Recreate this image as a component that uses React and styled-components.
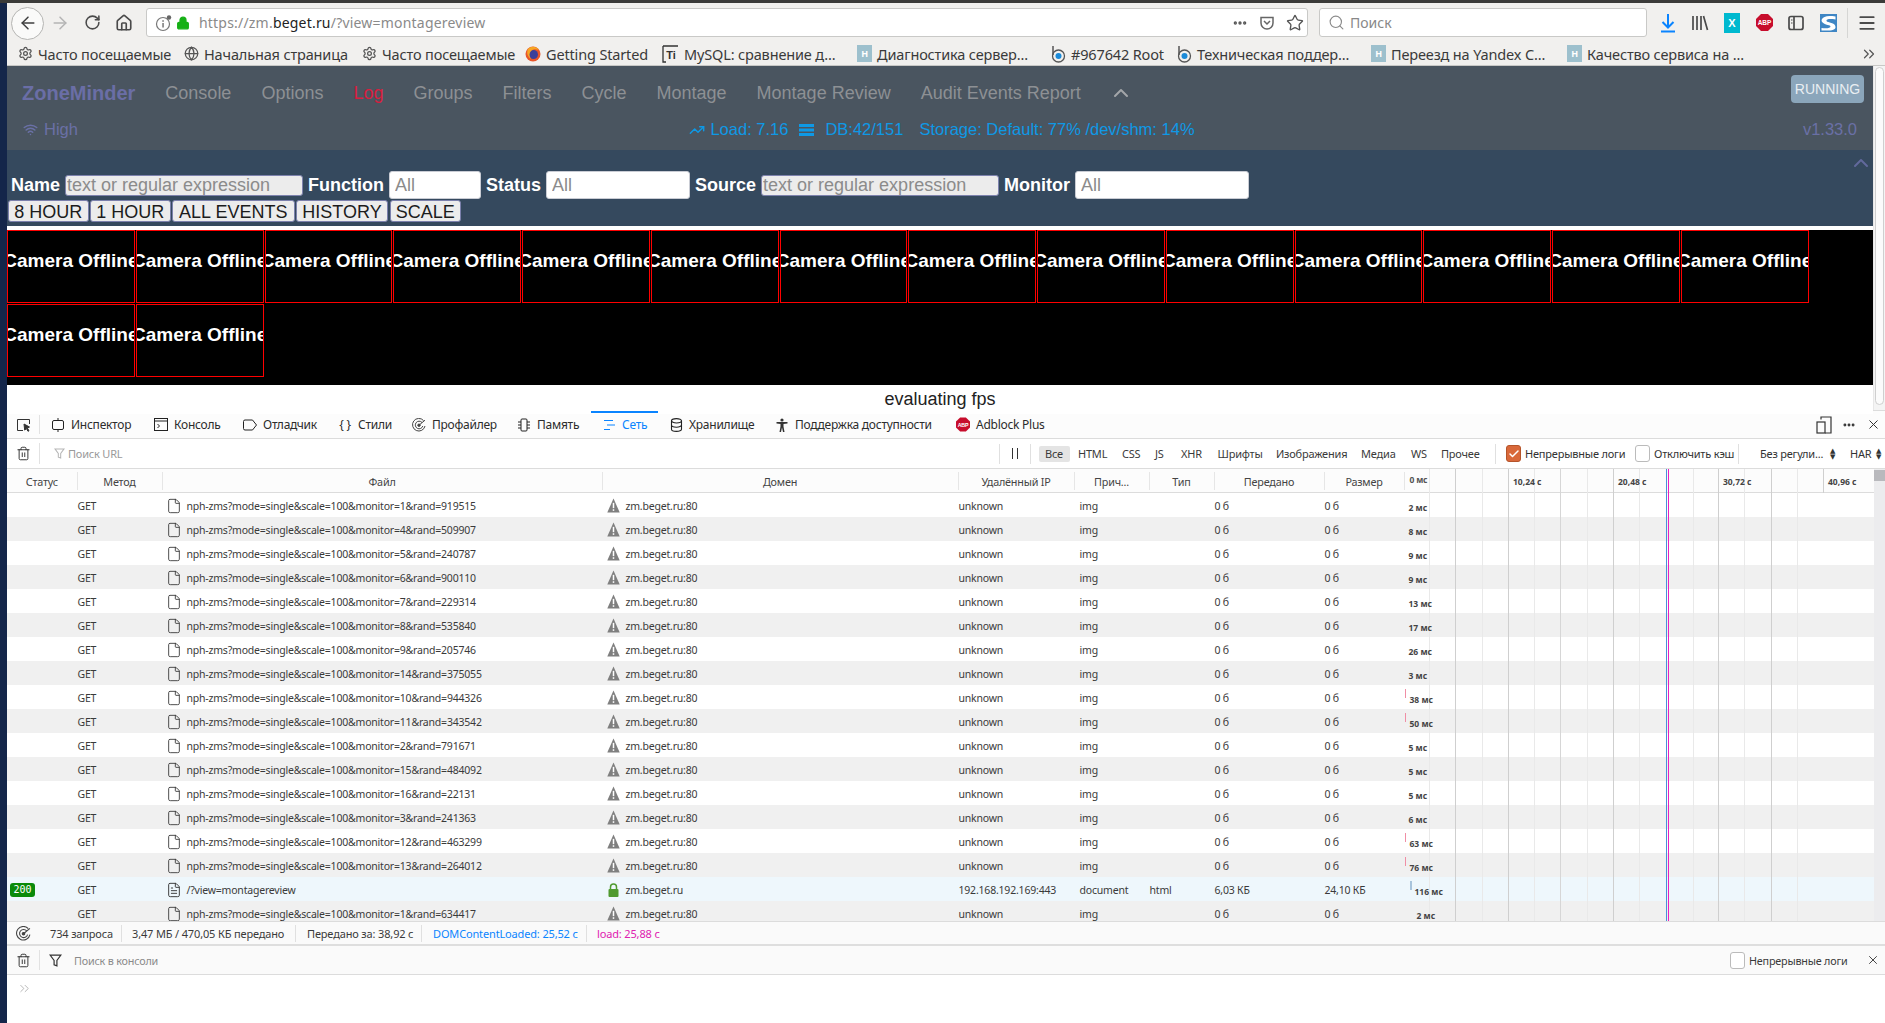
import styled, { createGlobalStyle } from 'styled-components';
import {
  ArrowLeft,
  ArrowRight,
  RotateCw,
  Home,
  Star,
  Search,
  ChevronUp,
  ChevronsRight,
  Menu,
  X,
  File,
  FileText,
  Wifi,
  TrendingUp,
  Settings,
  Globe,
  Trash2,
  Check,
  Lock,
  Ellipsis,
} from 'lucide-react';

const UI_FONT = '"Noto Sans", "DejaVu Sans", sans-serif';
const WEB_FONT = '"Liberation Sans", Arial, sans-serif';

const GlobalStyle = createGlobalStyle`
  html, body {
    margin: 0;
    padding: 0;
    background: #fff;
  }
  * {
    box-sizing: border-box;
  }
`;

const Root = styled.div`
  width: 1885px;
  height: 1023px;
  overflow: hidden;
  display: flex;
  flex-direction: column;
  background: #14264a;
`;

const TopEdge = styled.div`
  height: 3px;
  flex: none;
  background: #3b3b39;
`;

const Desktop = styled.div`
  flex: 1;
  display: flex;
  min-height: 0;
`;

const LeftEdge = styled.div`
  width: 7px;
  flex: none;
  background: #14264a;
`;

const BrowserWindow = styled.div`
  width: 1878px;
  flex: none;
  display: flex;
  flex-direction: column;
  background: #fff;
  font-family: ${UI_FONT};
`;

/* browser chrome */
const Toolbar = styled.div`
  height: 39px;
  flex: none;
  display: flex;
  align-items: center;
  padding-left: 4px;
  background: #f1f0ee;
`;

const BackButton = styled.div`
  width: 33px;
  height: 33px;
  flex: none;
  margin-top: 1px;
  border: 1px solid #b5b5b3;
  border-radius: 50%;
  background: #fafaf9;
  color: #3f3f3f;
  display: flex;
  align-items: center;
  justify-content: center;
`;

const ToolSlot = styled.div`
  width: 32px;
  height: 32px;
  flex: none;
  display: flex;
  align-items: center;
  justify-content: center;
  color: ${(p) => p.$color || '#4a4a4a'};
`;

const UrlBar = styled.div`
  width: 1162px;
  height: 29px;
  margin-left: 6px;
  flex: none;
  display: flex;
  align-items: center;
  background: #fff;
  border: 1px solid #c9c9c7;
  border-radius: 3px;
  padding-left: 7px;
  font-size: 14px;
  color: #8a8a8a;
`;

const UrlHost = styled.span`
  color: #222;
`;

const UrlText = styled.div`
  margin-left: 9px;
  flex: 1;
  letter-spacing: 0.2px;
  white-space: nowrap;
`;

const UrlActions = styled.div`
  display: flex;
  align-items: center;
  gap: 11px;
  padding-right: 3px;
  color: #555;
`;

const SearchBox = styled.div`
  width: 328px;
  height: 29px;
  margin-left: 11px;
  flex: none;
  display: flex;
  align-items: center;
  gap: 5px;
  padding-left: 8px;
  background: #fff;
  border: 1px solid #c9c9c7;
  border-radius: 3px;
  color: #888;
  font-size: 14px;
`;

const ToolIcons = styled.div`
  display: flex;
  align-items: center;
  margin-left: 5px;
`;

const ToolSeparator = styled.div`
  width: 1px;
  height: 30px;
  margin: 0 3px;
  background: #d6d6d4;
`;

const Bookmarks = styled.div`
  height: 24px;
  flex: none;
  display: flex;
  align-items: center;
  padding-left: 11px;
  background: #f1f0ee;
  border-bottom: 1px solid #c8c8c6;
`;

const Bookmark = styled.div`
  width: ${(p) => p.$w}px;
  flex: none;
  display: flex;
  align-items: center;
  gap: 5px;
  white-space: nowrap;
  font-size: 14.5px;
  letter-spacing: -0.15px;
  color: #3a3a3a;
`;

const BookmarkMore = styled.div`
  flex: none;
  margin-left: 96px;
  color: #555;
  display: flex;
`;

const FavH = styled.div`
  width: 15px;
  height: 17px;
  flex: none;
  background: #9dc0cd;
  color: #fff;
  font-size: 9px;
  font-weight: 700;
  text-align: center;
  line-height: 17px;
`;

/* page */
const PageArea = styled.div`
  height: 344px;
  flex: none;
  display: flex;
`;

const Page = styled.div`
  width: 1866px;
  flex: none;
  display: flex;
  flex-direction: column;
  font-family: ${WEB_FONT};
  position: relative;
`;

const PageScroll = styled.div`
  flex: 1;
  background: #f4f4f4;
  padding: 1px 1px;
  border-left: 1px solid #e8e8e8;
`;

const PageThumb = styled.div`
  height: 338px;
  border: 1px solid #cfcfcf;
  border-radius: 5px;
  background: #fbfbfb;
`;

const NavBar = styled.div`
  height: 84px;
  flex: none;
  background: #4a5560;
  display: flex;
  flex-direction: column;
`;

const NavTop = styled.div`
  height: 54px;
  flex: none;
  display: flex;
  align-items: center;
  gap: 30px;
  padding: 0 9px 0 15px;
`;

const Brand = styled.div`
  font-size: 20px;
  font-weight: 700;
  color: #6a6ea6;
`;

const NavLink = styled.div`
  font-size: 18px;
  white-space: nowrap;
  color: ${(p) => (p.$active ? '#d81e3f' : '#8d9094')};
`;

const NavCollapse = styled.div`
  display: flex;
  color: #a3a6a9;
  margin-left: -2px;
`;

const RunningBadge = styled.div`
  margin-left: auto;
  margin-top: -8px;
  width: 73px;
  height: 28px;
  border-radius: 4px;
  background: #8ba6bb;
  color: #e9eef2;
  font-size: 14px;
  display: flex;
  align-items: center;
  justify-content: center;
`;

const NavBottom = styled.div`
  height: 14px;
  flex: none;
  display: grid;
  grid-template-columns: 1fr auto 1fr;
  align-items: center;
  padding: 0 16px;
  font-size: 16.5px;
`;

const Signal = styled.div`
  display: flex;
  align-items: center;
  gap: 6px;
  color: #6a70a6;
`;

const Stats = styled.div`
  display: flex;
  align-items: center;
  padding-left: 4px;
  color: #0e99e6;
  white-space: nowrap;
`;

const StatIcon = styled.div`
  display: flex;
  margin: ${(p) => p.$m};
`;

const Version = styled.div`
  color: #6a70a6;
  text-align: right;
`;

const FilterBar = styled.div`
  height: 76px;
  flex: none;
  background: #35495e;
  padding-top: 21px;
`;

const FilterCollapse = styled.div`
  position: absolute;
  right: 0;
  top: 85px;
  color: #62699c;
  display: flex;
`;

const FilterRow = styled.div`
  height: 28px;
  display: flex;
  align-items: center;
  gap: 5px;
  padding-left: 4px;
`;

const FilterLabel = styled.label`
  font-size: 18px;
  font-weight: 700;
  color: #fff;
  white-space: nowrap;
`;

const FilterInput = styled.input`
  width: ${(p) => p.$w}px;
  height: ${(p) => (p.$text ? 21 : 28)}px;
  flex: none;
  padding: 0 2px 0 ${(p) => (p.$text ? 1 : 5)}px;
  font-family: ${WEB_FONT};
  font-size: 18px;
  background: ${(p) => (p.$text ? '#ececec' : '#fff')};
  border: 1px solid ${(p) => (p.$text ? '#7d82ad' : '#c9ccd4')};
  border-radius: 3px;
  outline: none;
  &::placeholder {
    color: #8b8b8b;
    opacity: 1;
  }
`;

const RangeRow = styled.div`
  display: flex;
  gap: 1.5px;
  margin-top: 1px;
  padding-left: 1px;
`;

const RangeButton = styled.button`
  height: 22px;
  width: ${(p) => p.$w}px;
  padding: 1px 0 0;
  font-family: ${WEB_FONT};
  font-size: 18px;
  line-height: 20px;
  color: #1c1c1c;
  background: #ececec;
  border: 1px solid #7b80ac;
  border-radius: 3px;
`;

const WhiteGap = styled.div`
  height: 4px;
  flex: none;
  background: #fff;
`;

const Montage = styled.div`
  height: 155px;
  flex: none;
  background: #000;
`;

const CameraGrid = styled.div`
  display: grid;
  grid-template-columns: repeat(14, 127.75px);
  grid-auto-rows: 73px;
  gap: 1px;
`;

const Camera = styled.div`
  border: 1px solid #f00;
  overflow: hidden;
  display: flex;
  justify-content: center;
  padding-top: 18px;
  color: #fff;
  font-size: 19px;
  font-weight: 700;
  line-height: 23px;
  white-space: nowrap;
`;

const FpsLine = styled.div`
  flex: 1;
  background: #fff;
  text-align: center;
  font-size: 18px;
  line-height: 29px;
  color: #222;
`;

/* devtools */
const Devtools = styled.div`
  flex: 1;
  min-height: 0;
  display: flex;
  flex-direction: column;
  font-size: 11px;
  color: #333;
`;

const TabBar = styled.div`
  height: 29px;
  flex: none;
  display: flex;
  align-items: center;
  background: #fcfcfc;
  border-top: 1px solid #dcdcdc;
  border-bottom: 1px solid #dcdcdc;
  font-size: 12px;
`;

const IconCell = styled.div`
  width: 33px;
  flex: none;
  height: 100%;
  display: flex;
  align-items: center;
  justify-content: center;
  color: #2d2d2d;
  position: relative;
  &::after {
    content: '';
    position: absolute;
    right: 0;
    top: 4px;
    bottom: 4px;
    width: 1px;
    background: #e2e2e2;
  }
`;

const Tab = styled.div`
  width: ${(p) => p.$w}px;
  flex: none;
  height: 100%;
  display: flex;
  align-items: center;
  gap: 6px;
  padding-left: ${(p) => p.$pad || 0}px;
  color: ${(p) => (p.$active ? '#0a84ff' : '#2c2c2c')};
  white-space: nowrap;
  letter-spacing: -0.25px;
  position: relative;
  &::before {
    content: ${(p) => (p.$active ? "''" : 'none')};
    position: absolute;
    top: 0;
    left: 0;
    right: 0;
    height: 2px;
    background: #0a84ff;
  }
`;

const TabIcon = styled.div`
  width: 14px;
  flex: none;
  display: flex;
  justify-content: center;
`;

const TabActions = styled.div`
  margin-left: auto;
  display: flex;
  align-items: center;
  gap: 10px;
  padding-right: 4px;
  color: #333;
`;

const NetToolbar = styled.div`
  height: 30px;
  flex: none;
  display: flex;
  align-items: center;
  background: #fff;
  border-bottom: 1px solid #dcdcdc;
  font-size: 11px;
  letter-spacing: -0.2px;
`;

const UrlFilter = styled.div`
  display: flex;
  align-items: center;
  gap: 3px;
  padding-left: 14px;
  color: #9a9a9a;
`;

const NetRight = styled.div`
  margin-left: auto;
  display: flex;
  align-items: center;
  height: 100%;
  width: 886px;
`;

const ToolDivider = styled.div`
  width: 1px;
  height: 20px;
  flex: none;
  background: #e0e0e0;
  margin: ${(p) => p.$m || 0};
`;

const PauseMark = styled.div`
  width: 30px;
  flex: none;
  display: flex;
  justify-content: center;
  gap: 4px;
  &::before,
  &::after {
    content: '';
    width: 1px;
    height: 11px;
    background: #333;
  }
`;

const TypeButton = styled.div`
  width: ${(p) => p.$w}px;
  flex: none;
  height: 16px;
  margin-right: ${(p) => (p.$on ? 8 : 0)}px;
  line-height: 16px;
  white-space: nowrap;
  color: #3a3a3a;
  background: ${(p) => (p.$on ? '#e4e4e4' : 'transparent')};
  border-radius: 2px;
  padding-left: ${(p) => (p.$on ? 6 : 0)}px;
`;

const CheckMark = styled.div`
  width: 15px;
  height: 17px;
  flex: none;
  margin: ${(p) => p.$m || 0};
  border-radius: 3px;
  border: 1px solid ${(p) => (p.$on ? '#b5542a' : '#bbb')};
  background: ${(p) => (p.$on ? '#d9683a' : '#fff')};
  color: #fff;
  display: flex;
  align-items: center;
  justify-content: center;
`;

const PlainText = styled.div`
  width: ${(p) => p.$w}px;
  flex: none;
  white-space: nowrap;
`;

const SortArrows = styled.div`
  font-size: 7px;
  line-height: 6px;
  width: ${(p) => p.$w}px;
  flex: none;
  text-align: left;
`;

const TableArea = styled.div`
  height: 452px;
  flex: none;
  display: flex;
`;

const Table = styled.div`
  width: 1867px;
  flex: none;
  position: relative;
  overflow: hidden;
`;

const COLUMNS = '70.5px 85px 440px 356px 116px 75px 65px 110px 80px 470px';

const HeaderRow = styled.div`
  height: 24px;
  display: grid;
  grid-template-columns: ${COLUMNS};
  padding-top: 1px;
  background: #fcfcfc;
  border-bottom: 1px solid #dcdcdc;
  letter-spacing: -0.2px;
`;

const HeaderCell = styled.div`
  display: flex;
  align-items: center;
  justify-content: center;
  color: #444;
  font-size: 10.8px;
  border-right: 1px solid #e6e6e6;
  margin: 2px 0;
`;

const WaterHeader = styled.div`
  font-size: 8.5px;
  font-weight: 700;
  color: #555;
  line-height: 20px;
  padding-left: 5px;
`;

const Row = styled.div`
  height: 24px;
  display: grid;
  grid-template-columns: ${COLUMNS};
  align-items: center;
  padding-top: 1px;
  background: ${(p) => (p.$doc ? '#eef7fc' : p.$odd ? '#f0f0f0' : '#fff')};
  color: #3a3a3a;
  font-size: 10.5px;
  letter-spacing: -0.2px;
  white-space: nowrap;
`;

const Cell = styled.div`
  display: flex;
  align-items: center;
  gap: ${(p) => p.$gap || 0}px;
  padding-left: ${(p) => p.$pad || 0}px;
  min-width: 0;
`;

const StatusBadge = styled.div`
  width: 25px;
  height: 14px;
  border-radius: 3px;
  background: #0a8a0a;
  color: #fff;
  font-family: "DejaVu Sans Mono", monospace;
  font-size: 10px;
  line-height: 14px;
  text-align: center;
  letter-spacing: 0;
`;

const Timing = styled.div`
  display: flex;
  align-items: flex-start;
  height: 23px;
  padding-left: ${(p) => p.$pad}px;
  position: relative;
  z-index: 2;
`;

const TimingBar = styled.div`
  width: ${(p) => (p.$doc ? 2 : 1)}px;
  height: 9px;
  margin: 3px ${(p) => (p.$doc ? 3 : 4)}px 0 0;
  background: ${(p) => (p.$doc ? '#a8c4dc' : '#f08ea5')};
  flex: none;
`;

const TimingLabel = styled.div`
  margin-top: 8px;
  font-size: 8.5px;
  line-height: 11px;
  font-weight: 700;
  color: #444;
  letter-spacing: 0;
`;

const GridLine = styled.div`
  position: absolute;
  top: 0;
  bottom: ${(p) => (p.$short ? 'auto' : 0)};
  height: ${(p) => (p.$short ? '24px' : 'auto')};
  width: 1px;
  background: ${(p) => p.$color};
`;

const TickLabel = styled.div`
  position: absolute;
  top: 1px;
  line-height: 24px;
  font-size: 8.5px;
  font-weight: 700;
  color: #444;
  white-space: nowrap;
`;

const TableScroll = styled.div`
  flex: 1;
  background: #ececee;
`;

const TableThumb = styled.div`
  height: 11px;
  margin-top: 1px;
  background: #b9b9bd;
`;

const StatusBar = styled.div`
  height: 23px;
  flex: none;
  display: flex;
  align-items: center;
  background: #fafafa;
  border-top: 1px solid #dcdcdc;
  font-size: 11px;
  letter-spacing: -0.15px;
`;

const StatusIcon = styled.div`
  width: 36px;
  padding-left: 9px;
  flex: none;
  display: flex;
  color: #555;
`;

const StatusItem = styled.div`
  width: ${(p) => p.$w}px;
  flex: none;
  height: 17px;
  line-height: 17px;
  white-space: nowrap;
  padding-left: ${(p) => p.$pad}px;
  color: ${(p) => p.$color || '#3a3a3a'};
  border-right: 1px solid ${(p) => (p.$end ? 'transparent' : '#e0e0e0')};
`;

const Splitter = styled.div`
  height: 2px;
  flex: none;
  background: #dedede;
`;

const ConsoleBar = styled.div`
  height: 29px;
  flex: none;
  display: flex;
  align-items: center;
  background: #fafafa;
  border-bottom: 1px solid #dcdcdc;
  font-size: 10.8px;
  letter-spacing: -0.2px;
`;

const ConsoleFilter = styled.div`
  display: flex;
  align-items: center;
  gap: 12px;
  padding-left: 9px;
  color: #8a8a8a;
`;

const ConsoleRight = styled.div`
  margin-left: auto;
  display: flex;
  align-items: center;
  gap: 4px;
  padding-right: 5px;
  color: #3a3a3a;
`;

const ConsolePrompt = styled.div`
  flex: 1;
  background: #fff;
  color: #a8a8a8;
  padding: 6px 0 0 10px;
`;

/* small drawings */
const Warn = () => (
  <svg width="13" height="15" viewBox="0 0 12 14">
    <path d="M6 0.5 L11.8 13.5 H0.2 Z" fill="#7f7f7f" />
    <rect x="5.3" y="4.5" width="1.4" height="5" fill="#fff" />
    <rect x="5.3" y="10.5" width="1.4" height="1.5" fill="#fff" />
  </svg>
);

const GreenLock = () => (
  <svg width="13" height="14" viewBox="0 0 12 14">
    <path d="M3 6V4a3 3 0 0 1 6 0v2" fill="none" stroke="#4f9a2f" strokeWidth="1.5" />
    <rect x="1" y="6" width="10" height="8" rx="1" fill="#4f9a2f" />
  </svg>
);

const InfoDot = () => (
  <svg width="22" height="18" viewBox="0 0 22 18">
    <circle cx="9" cy="10" r="6.5" fill="none" stroke="#777" strokeWidth="1.2" />
    <rect x="8.3" y="9" width="1.5" height="4.5" fill="#777" />
    <rect x="8.3" y="6.2" width="1.5" height="1.6" fill="#777" />
    <circle cx="15" cy="3.5" r="2.2" fill="#666" />
  </svg>
);

const PocketIcon = () => (
  <svg width="16" height="16" viewBox="0 0 16 16" fill="none" stroke="#666" strokeWidth="1.5">
    <path d="M2 2.5h12v5.5a6 6 0 0 1-12 0z" />
    <path d="M5 6l3 3 3-3" />
  </svg>
);

const DownloadIcon = () => (
  <svg width="18" height="20" viewBox="0 0 18 20" fill="none" stroke="#0a84ff" strokeWidth="2">
    <path d="M9 1v13M3.5 9L9 14.5 14.5 9" />
    <path d="M2 18.5h14" />
  </svg>
);

const LibraryIcon = () => (
  <svg width="18" height="18" viewBox="0 0 18 18" fill="none" stroke="#4a4a4a" strokeWidth="1.7">
    <path d="M2 2v14M6 2v14M10 2v14M12.5 2l4 14" />
  </svg>
);

const BoxX = () => (
  <svg width="16" height="20" viewBox="0 0 16 20">
    <rect width="16" height="20" fill="#00b9cf" />
    <text x="8" y="14" textAnchor="middle" fontSize="11" fontWeight="700" fill="#fff" fontFamily="Liberation Sans">
      X
    </text>
  </svg>
);

const AbpIcon = ({ size = 17 }) => (
  <svg width={size} height={size} viewBox="0 0 17 17">
    <polygon points="5,0 12,0 17,5 17,12 12,17 5,17 0,12 0,5" fill="#c70d2c" />
    <text x="8.5" y="11" textAnchor="middle" fontSize="6.5" fontWeight="700" fill="#fff" fontFamily="Liberation Sans">
      ABP
    </text>
  </svg>
);

const SidebarIcon = () => (
  <svg width="16" height="16" viewBox="0 0 16 16" fill="none" stroke="#4a4a4a" strokeWidth="1.7">
    <rect x="1" y="1.5" width="14" height="13" rx="2" />
    <path d="M6 2v12" />
    <path d="M3 5h1.5M3 8h1.5" strokeWidth="1.2" />
  </svg>
);

const SIcon = () => (
  <svg width="17" height="18" viewBox="0 0 17 18">
    <rect width="17" height="18" fill="#3f86c4" />
    <path d="M1.5 6c2-4 6-4.5 14-3.5v3C10 4.5 6 5 6.5 7c1 2 9 1 9 6 0 3-4 4-14 3.5v-2.5c5 .5 9 .3 9-1.5 0-2-9-1.5-9-6.5z" fill="#fff" />
  </svg>
);

const BIcon = () => (
  <svg width="15" height="18" viewBox="0 0 15 18" fill="none">
    <path d="M2 1v9" stroke="#555" strokeWidth="1.5" />
    <circle cx="7.5" cy="11" r="6" stroke="#555" strokeWidth="1.3" />
    <circle cx="7.5" cy="11" r="3" fill="#1b8ad8" />
  </svg>
);

const TiIcon = () => (
  <svg width="17" height="18" viewBox="0 0 17 18">
    <path d="M1 1h15M1 1v16h3" fill="none" stroke="#333" strokeWidth="1.3" />
    <text x="9" y="14" textAnchor="middle" fontSize="11" fontWeight="700" fill="#333" fontFamily="Liberation Sans">
      Ti
    </text>
  </svg>
);

const FoxIcon = () => (
  <svg width="16" height="16" viewBox="0 0 16 16">
    <circle cx="8" cy="8" r="7.5" fill="#e8562a" />
    <circle cx="8.5" cy="8.5" r="4.5" fill="#3b3f9a" />
    <path d="M3 3c3-3 8-3 11 1-3-1-6-1-8 1-2 2-2 5 0 8-3-2-5-6-3-10z" fill="#f6a623" />
  </svg>
);

const PickIcon = () => (
  <svg width="16" height="14" viewBox="0 0 16 14" fill="none" stroke="#333" strokeWidth="1">
    <path d="M7 12.5H1.5v-11h12V6" />
    <path d="M8 6l5.5 3-2.2 1 1.7 2.7-1 .6-1.6-2.7-1.7 1.5z" fill="#333" />
  </svg>
);

const InspectorIcon = () => (
  <svg width="14" height="14" viewBox="0 0 14 14" fill="none" stroke="#222" strokeWidth="1">
    <rect x="1.5" y="2.5" width="11" height="9" rx="1.5" />
    <path d="M7 0v2.5M7 11.5V14" />
  </svg>
);

const ConsoleIcon = () => (
  <svg width="14" height="13" viewBox="0 0 14 13" fill="none" stroke="#222" strokeWidth="1">
    <rect x="0.5" y="0.5" width="13" height="12" />
    <path d="M0.5 3h13" />
    <path d="M3.5 6l2 2-2 2" />
  </svg>
);

const DebuggerIcon = () => (
  <svg width="14" height="12" viewBox="0 0 14 12" fill="none" stroke="#222" strokeWidth="1">
    <path d="M2 1h7.5l4 5-4 5H2a1.5 1.5 0 0 1-1.5-1.5v-7A1.5 1.5 0 0 1 2 1z" />
  </svg>
);

const ProfilerIcon = ({ size = 14 }) => (
  <svg width={size} height={size} viewBox="0 0 14 14" fill="none" stroke="#444" strokeWidth="1">
    <path d="M11.5 2.5A6.3 6.3 0 1 0 13 8" />
    <path d="M10 4.5A3.8 3.8 0 1 0 10.8 8" />
    <circle cx="7" cy="7.2" r="1.2" fill="#444" />
    <path d="M7 7.2l6-5" />
  </svg>
);

const MemoryIcon = () => (
  <svg width="14" height="14" viewBox="0 0 14 14" fill="none" stroke="#222" strokeWidth="1">
    <rect x="4" y="1" width="6" height="12" rx="1" />
    <path d="M1 4h3M1 7h3M1 10h3M10 4h3M10 7h3M10 10h3" />
  </svg>
);

const NetworkIcon = () => (
  <svg width="13" height="12" viewBox="0 0 13 12" fill="none" stroke="#0a84ff" strokeWidth="1.2">
    <path d="M1 1.5h9M4 6h8M1 10.5h6" />
  </svg>
);

const StorageIcon = () => (
  <svg width="13" height="14" viewBox="0 0 13 14" fill="none" stroke="#222" strokeWidth="1.1">
    <ellipse cx="6.5" cy="2.8" rx="5" ry="2.2" />
    <path d="M1.5 2.8v8.4c0 1.2 2.2 2.2 5 2.2s5-1 5-2.2V2.8" />
    <path d="M1.5 7c0 1.2 2.2 2.2 5 2.2s5-1 5-2.2" />
  </svg>
);

const A11yIcon = () => (
  <svg width="12" height="14" viewBox="0 0 12 14" fill="#333">
    <circle cx="6" cy="2" r="1.6" />
    <path d="M0.5 4h11v1.4L7.5 6v2.5L8.5 14H7L6 9.5 5 14H3.5l1-5.5V6L0.5 5.4z" />
  </svg>
);

const ResponsiveIcon = () => (
  <svg width="16" height="18" viewBox="0 0 16 18" fill="none" stroke="#333" strokeWidth="1.2">
    <path d="M5 3.5V1h10v16H9" />
    <rect x="1" y="6" width="8" height="11" />
  </svg>
);

const DbIcon = () => (
  <svg width="15" height="14" viewBox="0 0 15 14" fill="#0e99e6">
    <rect y="1" width="15" height="3" />
    <rect y="5.5" width="15" height="3" />
    <rect y="10" width="15" height="3" />
  </svg>
);

const FunnelMark = ({ size = 11, color = '#b5b5b5' }) => (
  <svg width={size} height={size} viewBox="0 0 12 12" fill="none" stroke={color} strokeWidth="1.1">
    <path d="M1 1h10L7.3 6v5L4.7 10V6z" />
  </svg>
);

const SOURCE_ROWS = [
  [1, 919515, 2],
  [4, 509907, 8],
  [5, 240787, 9],
  [6, 900110, 9],
  [7, 229314, 13],
  [8, 535840, 17],
  [9, 205746, 26],
  [14, 375055, 3],
  [10, 944326, 38],
  [11, 343542, 50],
  [2, 791671, 5],
  [15, 484092, 5],
  [16, 22131, 5],
  [3, 241363, 6],
  [12, 463299, 63],
  [13, 264012, 76],
];

const BOOKMARKS = [
  { w: 166, icon: <Settings size={15} color="#555" />, label: 'Часто посещаемые' },
  { w: 178, icon: <Globe size={15} color="#555" />, label: 'Начальная страница' },
  { w: 163, icon: <Settings size={15} color="#555" />, label: 'Часто посещаемые' },
  { w: 137, icon: <FoxIcon />, label: 'Getting Started' },
  { w: 195, icon: <TiIcon />, label: 'MySQL: сравнение д...' },
  { w: 194, icon: <FavH>H</FavH>, label: 'Диагностика сервер...' },
  { w: 126, icon: <BIcon />, label: '#967642 Root' },
  { w: 194, icon: <BIcon />, label: 'Техническая поддер...' },
  { w: 196, icon: <FavH>H</FavH>, label: 'Переезд на Yandex C...' },
  { w: 197, icon: <FavH>H</FavH>, label: 'Качество сервиса на ...' },
];

const NAV_LINKS = ['Console', 'Options', 'Log', 'Groups', 'Filters', 'Cycle', 'Montage', 'Montage Review', 'Audit Events Report'];

const RANGES = [
  ['8 HOUR', 80.5],
  ['1 HOUR', 80.5],
  ['ALL EVENTS', 122.5],
  ['HISTORY', 92],
  ['SCALE', 71.5],
];

const TABS = [
  { w: 103, icon: <InspectorIcon />, label: 'Инспектор' },
  { w: 89, icon: <ConsoleIcon />, label: 'Консоль' },
  { w: 95, icon: <DebuggerIcon />, label: 'Отладчик' },
  { w: 74, icon: <span>{'{ }'}</span>, label: 'Стили' },
  { w: 105, icon: <ProfilerIcon />, label: 'Профайлер' },
  { w: 74, icon: <MemoryIcon />, label: 'Память' },
  { w: 67, pad: 11, active: true, icon: <NetworkIcon />, label: 'Сеть' },
  { w: 117, pad: 11, icon: <StorageIcon />, label: 'Хранилище' },
  { w: 181, icon: <A11yIcon />, label: 'Поддержка доступности' },
  { w: 100, icon: <AbpIcon size={15} />, label: 'Adblock Plus' },
];

const TYPES = [
  ['Все', 31],
  ['HTML', 44],
  ['CSS', 33],
  ['JS', 26],
  ['XHR', 36.5],
  ['Шрифты', 58.5],
  ['Изображения', 85],
  ['Медиа', 50],
  ['WS', 30],
  ['Прочее', 54],
];

const GRID_LINES = [
  [1429, '#e9e9e9'],
  [1455, '#cfcfcf'],
  [1482, '#e9e9e9'],
  [1508, '#cfcfcf'],
  [1534, '#e9e9e9'],
  [1560, '#d6d6d6'],
  [1587, '#e9e9e9'],
  [1613, '#cfcfcf'],
  [1639, '#e9e9e9'],
  [1666, '#4a90d9'],
  [1668, '#e91fc0'],
  [1693, '#e9e9e9'],
  [1718, '#cfcfcf'],
  [1744, '#e9e9e9'],
  [1771, '#cfcfcf'],
  [1797, '#e9e9e9'],
];

const TICKS = [
  ['10,24 с', 1513],
  ['20,48 с', 1618],
  ['30,72 с', 1723],
  ['40,96 с', 1828],
];

function NetRow({ monitor, rand, odd, pad, children }) {
  return (
    <Row $odd={odd}>
      <Cell />
      <Cell>GET</Cell>
      <Cell $pad={3} $gap={5}>
        <File size={16} strokeWidth={1.3} color="#333" />
        nph-zms?mode=single&scale=100&monitor={monitor}&rand={rand}
      </Cell>
      <Cell $pad={4} $gap={6}>
        <Warn />
        zm.beget.ru:80
      </Cell>
      <Cell>unknown</Cell>
      <Cell $pad={5}>img</Cell>
      <Cell />
      <Cell>0 б</Cell>
      <Cell>0 б</Cell>
      <Timing $pad={pad}>{children}</Timing>
    </Row>
  );
}

function App() {
  return (
    <Root>
      <GlobalStyle />
      <TopEdge />
      <Desktop>
        <LeftEdge />
        <BrowserWindow>
          <Toolbar>
            <BackButton>
              <ArrowLeft size={20} strokeWidth={1.8} />
            </BackButton>
            <ToolSlot $color="#b4b4b4">
              <ArrowRight size={20} strokeWidth={1.8} />
            </ToolSlot>
            <ToolSlot>
              <RotateCw size={17} strokeWidth={2.2} />
            </ToolSlot>
            <ToolSlot>
              <Home size={18} strokeWidth={2.2} />
            </ToolSlot>
            <UrlBar>
              <InfoDot />
              <Lock size={14} color="#16b016" fill="#16b016" strokeWidth={2.4} />
              <UrlText>
                https://zm.<UrlHost>beget.ru</UrlHost>/?view=montagereview
              </UrlText>
              <UrlActions>
                <Ellipsis size={16} strokeWidth={3} />
                <PocketIcon />
                <Star size={18} strokeWidth={1.8} />
              </UrlActions>
            </UrlBar>
            <SearchBox>
              <Search size={17} strokeWidth={1.6} color="#8a8a8a" />
              Поиск
            </SearchBox>
            <ToolIcons>
              <ToolSlot><DownloadIcon /></ToolSlot>
              <ToolSlot><LibraryIcon /></ToolSlot>
              <ToolSlot><BoxX /></ToolSlot>
              <ToolSlot><AbpIcon /></ToolSlot>
              <ToolSlot><SidebarIcon /></ToolSlot>
              <ToolSlot><SIcon /></ToolSlot>
              <ToolSeparator />
              <ToolSlot><Menu size={20} strokeWidth={2.2} /></ToolSlot>
            </ToolIcons>
          </Toolbar>
          <Bookmarks>
            {BOOKMARKS.map((b, i) => (
              <Bookmark key={i} $w={b.w}>
                {b.icon}
                {b.label}
              </Bookmark>
            ))}
            <BookmarkMore>
              <ChevronsRight size={18} strokeWidth={1.6} />
            </BookmarkMore>
          </Bookmarks>

          <PageArea>
            <Page>
              <NavBar>
                <NavTop>
                  <Brand>ZoneMinder</Brand>
                  {NAV_LINKS.map((link) => (
                    <NavLink key={link} $active={link === 'Log'}>
                      {link}
                    </NavLink>
                  ))}
                  <NavCollapse>
                    <ChevronUp size={24} strokeWidth={2} />
                  </NavCollapse>
                  <RunningBadge>RUNNING</RunningBadge>
                </NavTop>
                <NavBottom>
                  <Signal>
                    <Wifi size={15} strokeWidth={2.4} />
                    High
                  </Signal>
                  <Stats>
                    <TrendingUp size={16} strokeWidth={2.2} />
                    <StatIcon $m="0 0 0 5px">Load: 7.16</StatIcon>
                    <StatIcon $m="0 11px 0 11px"><DbIcon /></StatIcon>
                    DB:42/151
                    <StatIcon $m="0 0 0 16px">Storage: Default: 77% /dev/shm: 14%</StatIcon>
                  </Stats>
                  <Version>v1.33.0</Version>
                </NavBottom>
              </NavBar>
              <FilterBar>
                <FilterRow>
                  <FilterLabel>Name</FilterLabel>
                  <FilterInput $text $w={238} placeholder="text or regular expression" readOnly />
                  <FilterLabel>Function</FilterLabel>
                  <FilterInput $w={92} placeholder="All" readOnly />
                  <FilterLabel>Status</FilterLabel>
                  <FilterInput $w={144} placeholder="All" readOnly />
                  <FilterLabel>Source</FilterLabel>
                  <FilterInput $text $w={238} placeholder="text or regular expression" readOnly />
                  <FilterLabel>Monitor</FilterLabel>
                  <FilterInput $w={174} placeholder="All" readOnly />
                </FilterRow>
                <RangeRow>
                  {RANGES.map(([label, w]) => (
                    <RangeButton key={label} $w={w}>
                      {label}
                    </RangeButton>
                  ))}
                </RangeRow>
              </FilterBar>
              <FilterCollapse>
                <ChevronUp size={24} strokeWidth={2} />
              </FilterCollapse>
              <WhiteGap />
              <Montage>
                <CameraGrid>
                  {Array.from({ length: 16 }, (_, i) => (
                    <Camera key={i}>Camera Offline</Camera>
                  ))}
                </CameraGrid>
              </Montage>
              <FpsLine>evaluating fps</FpsLine>
            </Page>
            <PageScroll>
              <PageThumb />
            </PageScroll>
          </PageArea>

          <Devtools>
            <TabBar>
              <IconCell><PickIcon /></IconCell>
              <Tab $w={11} />
              {TABS.map((t) => (
                <Tab key={t.label} $w={t.w} $pad={t.pad} $active={t.active}>
                  <TabIcon>{t.icon}</TabIcon>
                  {t.label}
                </Tab>
              ))}
              <TabActions>
                <ResponsiveIcon />
                <Ellipsis size={14} strokeWidth={3} />
                <X size={15} strokeWidth={1.6} />
              </TabActions>
            </TabBar>
            <NetToolbar>
              <IconCell><Trash2 size={15} strokeWidth={1.5} /></IconCell>
              <UrlFilter>
                <FunnelMark />
                Поиск URL
              </UrlFilter>
              <NetRight>
                <ToolDivider />
                <PauseMark />
                <ToolDivider $m="0 8px 0 0" />
                {TYPES.map(([label, w]) => (
                  <TypeButton key={label} $w={w} $on={label === 'Все'}>
                    {label}
                  </TypeButton>
                ))}
                <ToolDivider $m="0 10px 0 0" />
                <CheckMark $on $m="0 4px 0 0"><Check size={12} strokeWidth={3} /></CheckMark>
                <PlainText $w={110}>Непрерывные логи</PlainText>
                <CheckMark $m="0 4px 0 0" />
                <PlainText $w={84}>Отключить кэш</PlainText>
                <ToolDivider $m="0 21px 0 0" />
                <PlainText $w={70}>Без регули...</PlainText>
                <SortArrows $w={20}>▲<br />▼</SortArrows>
                <PlainText $w={26}>HAR</PlainText>
                <SortArrows $w={6}>▲<br />▼</SortArrows>
              </NetRight>
            </NetToolbar>
            <TableArea>
              <Table>
                <HeaderRow>
                  <HeaderCell>Статус</HeaderCell>
                  <HeaderCell>Метод</HeaderCell>
                  <HeaderCell>Файл</HeaderCell>
                  <HeaderCell>Домен</HeaderCell>
                  <HeaderCell>Удалённый IP</HeaderCell>
                  <HeaderCell>Прич...</HeaderCell>
                  <HeaderCell>Тип</HeaderCell>
                  <HeaderCell>Передано</HeaderCell>
                  <HeaderCell>Размер</HeaderCell>
                  <WaterHeader>0 мс</WaterHeader>
                </HeaderRow>
                {SOURCE_ROWS.map(([monitor, rand, ms], i) => (
                  <NetRow key={rand} monitor={monitor} rand={rand} odd={i % 2 === 1} pad={ms >= 38 ? 0 : 4}>
                    {ms >= 38 && <TimingBar />}
                    <TimingLabel>{ms} мс</TimingLabel>
                  </NetRow>
                ))}
                <Row $doc>
                  <Cell $pad={3}><StatusBadge>200</StatusBadge></Cell>
                  <Cell>GET</Cell>
                  <Cell $pad={3} $gap={5}>
                    <FileText size={16} strokeWidth={1.4} color="#333" />
                    /?view=montagereview
                  </Cell>
                  <Cell $pad={4} $gap={6}>
                    <GreenLock />
                    zm.beget.ru
                  </Cell>
                  <Cell>192.168.192.169:443</Cell>
                  <Cell $pad={5}>document</Cell>
                  <Cell>html</Cell>
                  <Cell>6,03 КБ</Cell>
                  <Cell>24,10 КБ</Cell>
                  <Timing $pad={5}>
                    <TimingBar $doc />
                    <TimingLabel>116 мс</TimingLabel>
                  </Timing>
                </Row>
                <NetRow monitor={1} rand={634417} odd pad={12}>
                  <TimingLabel>2 мс</TimingLabel>
                </NetRow>
                {GRID_LINES.map(([x, color]) => (
                  <GridLine key={x} $color={color} style={{ left: x - 7 }} />
                ))}
                <GridLine $short $color="#cfcfcf" style={{ left: 1823 - 7 }} />
                {TICKS.map(([label, x]) => (
                  <TickLabel key={label} style={{ left: x - 7 }}>
                    {label}
                  </TickLabel>
                ))}
              </Table>
              <TableScroll>
                <TableThumb />
              </TableScroll>
            </TableArea>
            <StatusBar>
              <StatusIcon><ProfilerIcon size={15} /></StatusIcon>
              <StatusItem $w={79} $pad={7}>734 запроса</StatusItem>
              <StatusItem $w={174} $pad={10}>3,47 МБ / 470,05 КБ передано</StatusItem>
              <StatusItem $w={126} $pad={11}>Передано за: 38,92 с</StatusItem>
              <StatusItem $w={165} $pad={11} $color="#0a84ff">DOMContentLoaded: 25,52 с</StatusItem>
              <StatusItem $w={90} $pad={10} $color="#e020b0" $end>load: 25,88 с</StatusItem>
            </StatusBar>
            <Splitter />
            <ConsoleBar>
              <IconCell><Trash2 size={15} strokeWidth={1.5} /></IconCell>
              <ConsoleFilter>
                <FunnelMark size={13} color="#333" />
                Поиск в консоли
              </ConsoleFilter>
              <ConsoleRight>
                <CheckMark />
                <PlainText $w={113}>Непрерывные логи</PlainText>
                <X size={14} strokeWidth={1.6} />
              </ConsoleRight>
            </ConsoleBar>
            <ConsolePrompt>
              <ChevronsRight size={15} strokeWidth={1.3} />
            </ConsolePrompt>
          </Devtools>
        </BrowserWindow>
      </Desktop>
    </Root>
  );
}

export default App;
